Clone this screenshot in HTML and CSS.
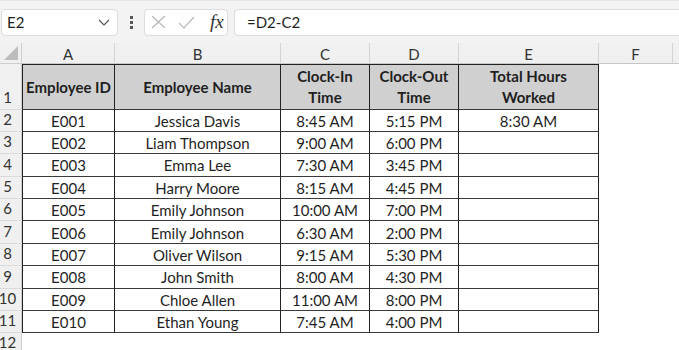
FILE: index.html
```html
<!DOCTYPE html>
<html lang="en">
<head>
<meta charset="UTF-8">
<meta name="viewport" content="width=device-width, initial-scale=1.0">
<title>Employee hours</title>
<link rel="stylesheet" href="styles.css">
</head>
<body>

    <div class="formula-bar">
        <div class="name-box">
            <span>E2</span>
            <svg width="12" height="7" viewBox="0 0 12 7"><path d="M1 1 L6 6 L11 1" fill="none" stroke="#555" stroke-width="1.2"/></svg>
        </div>
        <div class="grip"><i></i><i></i><i></i></div>
        <div class="fx-buttons">
            <svg width="15" height="14" viewBox="0 0 15 14"><path d="M1 1 L14 13 M14 1 L1 13" fill="none" stroke="#b8b8b8" stroke-width="1.2"/></svg>
            <svg width="17" height="13" viewBox="0 0 17 13"><path d="M1 7 L6 12 L16 1" fill="none" stroke="#b8b8b8" stroke-width="1.2"/></svg>
            <span class="fx">fx</span>
        </div>
        <div class="formula-input">=D2-C2</div>
    </div>

    <div class="sheet">
        <!-- column headers -->
        <div class="corner"><span class="tri"></span></div>
        <div class="col-head">A</div>
        <div class="col-head">B</div>
        <div class="col-head">C</div>
        <div class="col-head">D</div>
        <div class="col-head">E</div>
        <div class="col-head">F</div>
        <div class="col-head last"></div>

        <!-- row 1 -->
        <div class="row-head">1</div>
        <div class="cell title first top">Employee ID</div>
        <div class="cell title top">Employee Name</div>
        <div class="cell title top">Clock-In<br>Time</div>
        <div class="cell title top">Clock-Out<br>Time</div>
        <div class="cell title top">Total Hours<br>Worked</div>
        <div class="blank"></div>
        <div class="blank"></div>

        <div class="row-head">2</div>
        <div class="cell first">E001</div>
        <div class="cell">Jessica Davis</div>
        <div class="cell">8:45 AM</div>
        <div class="cell">5:15 PM</div>
        <div class="cell">8:30 AM</div>
        <div class="blank"></div>
        <div class="blank"></div>

        <div class="row-head">3</div>
        <div class="cell first">E002</div>
        <div class="cell">Liam Thompson</div>
        <div class="cell">9:00 AM</div>
        <div class="cell">6:00 PM</div>
        <div class="cell"></div>
        <div class="blank"></div>
        <div class="blank"></div>

        <div class="row-head">4</div>
        <div class="cell first">E003</div>
        <div class="cell">Emma Lee</div>
        <div class="cell">7:30 AM</div>
        <div class="cell">3:45 PM</div>
        <div class="cell"></div>
        <div class="blank"></div>
        <div class="blank"></div>

        <div class="row-head">5</div>
        <div class="cell first">E004</div>
        <div class="cell">Harry Moore</div>
        <div class="cell">8:15 AM</div>
        <div class="cell">4:45 PM</div>
        <div class="cell"></div>
        <div class="blank"></div>
        <div class="blank"></div>

        <div class="row-head">6</div>
        <div class="cell first">E005</div>
        <div class="cell">Emily Johnson</div>
        <div class="cell">10:00 AM</div>
        <div class="cell">7:00 PM</div>
        <div class="cell"></div>
        <div class="blank"></div>
        <div class="blank"></div>

        <div class="row-head">7</div>
        <div class="cell first">E006</div>
        <div class="cell">Emily Johnson</div>
        <div class="cell">6:30 AM</div>
        <div class="cell">2:00 PM</div>
        <div class="cell"></div>
        <div class="blank"></div>
        <div class="blank"></div>

        <div class="row-head">8</div>
        <div class="cell first">E007</div>
        <div class="cell">Oliver Wilson</div>
        <div class="cell">9:15 AM</div>
        <div class="cell">5:30 PM</div>
        <div class="cell"></div>
        <div class="blank"></div>
        <div class="blank"></div>

        <div class="row-head">9</div>
        <div class="cell first">E008</div>
        <div class="cell">John Smith</div>
        <div class="cell">8:00 AM</div>
        <div class="cell">4:30 PM</div>
        <div class="cell"></div>
        <div class="blank"></div>
        <div class="blank"></div>

        <div class="row-head">10</div>
        <div class="cell first">E009</div>
        <div class="cell">Chloe Allen</div>
        <div class="cell">11:00 AM</div>
        <div class="cell">8:00 PM</div>
        <div class="cell"></div>
        <div class="blank"></div>
        <div class="blank"></div>

        <div class="row-head">11</div>
        <div class="cell first">E010</div>
        <div class="cell">Ethan Young</div>
        <div class="cell">7:45 AM</div>
        <div class="cell">4:00 PM</div>
        <div class="cell"></div>
        <div class="blank"></div>
        <div class="blank"></div>

        <div class="row-head">12</div>
    </div>

</body>
</html>
```

FILE: styles.css
```css
* {
    box-sizing: border-box;
}
body {
    margin: 0;
    background: #f3f3f3;
    font-family: Lato, "Noto Sans", sans-serif;
    color: #1f1f1f;
    height: 350px;
    overflow: hidden;
}

/* formula bar */
.formula-bar {
    display: flex;
    align-items: center;
    height: 43px;
    padding: 8px 0 8px 1px;
    border-top: 1px solid #e6e6e6;
}
.name-box {
    display: flex;
    align-items: center;
    justify-content: space-between;
    width: 117px;
    height: 27px;
    padding: 0 7px 0 5px;
    background: #fff;
    border: 1px solid #dcdcdc;
    border-radius: 4px;
    font-size: 15px;
}
.grip {
    display: flex;
    flex-direction: column;
    gap: 2px;
    margin: 0 11px 0 12px;
}
.grip i {
    width: 3px;
    height: 3px;
    background: #555;
}
.fx-buttons {
    display: flex;
    align-items: center;
    width: 84px;
    height: 27px;
    padding: 0 0 0 6px;
    background: #fff;
    border: 1px solid #dcdcdc;
    border-radius: 4px;
}
.fx-buttons svg:nth-child(2) {
    margin-left: 12px;
}
.fx {
    margin-left: 15px;
    font-family: "Liberation Serif", serif;
    font-style: italic;
    font-size: 19px;
    color: #333;
}
.formula-input {
    flex: 1;
    height: 27px;
    margin-left: 6px;
    padding: 3px 0 0 12px;
    background: #fff;
    border: 1px solid #dcdcdc;
    border-right: none;
    border-radius: 4px 0 0 4px;
    font-size: 15px;
}

/* sheet grid */
.sheet {
    display: grid;
    grid-template-columns: 22px 93px 166px 89px 89px 140px 74px 1fr;
    grid-template-rows: 21px 45.5px repeat(10, 22.4px) 1fr;
    height: 307px;
    background: #fff;
}
.corner {
    position: relative;
    background: #f0f0f0;
    border-right: 1px solid #cfcfcf;
    border-bottom: 1px solid #cfcfcf;
}
.corner .tri {
    position: absolute;
    right: 3px;
    bottom: 3px;
    width: 0;
    height: 0;
    border-left: 14px solid transparent;
    border-bottom: 14px solid #bdbdbd;
}
.col-head {
    display: flex;
    align-items: center;
    justify-content: center;
    background: #f0f0f0;
    border-right: 1px solid #d4d4d4;
    border-bottom: 1px solid #c6c6c6;
    font-size: 15px;
    color: #333;
    padding-top: 2px;
}
.col-head.last {
    border-right: none;
}
.row-head {
    display: flex;
    align-items: flex-end;
    justify-content: center;
    padding: 0 6px 1px 0;
    background: #f0f0f0;
    border-right: 1px solid #cfcfcf;
    border-bottom: 1px solid #dadada;
    font-size: 15px;
    color: #333;
    white-space: nowrap;
}
.row-head:nth-of-type(8n+1) {
    padding-bottom: 3px;
}
.cell {
    display: flex;
    align-items: center;
    justify-content: center;
    text-align: center;
    border-right: 1px solid #222;
    border-bottom: 1px solid #3a3a3a;
    font-size: 15px;
    padding-top: 1px;
    white-space: nowrap;
}
.cell.first {
    border-left: 1px solid #222;
}
.cell.top {
    border-top: 1px solid #222;
}
.cell.title {
    background: #d0d0d0;
    font-weight: bold;
    line-height: 21px;
}
.blank {
    background: #fff;
}
```
